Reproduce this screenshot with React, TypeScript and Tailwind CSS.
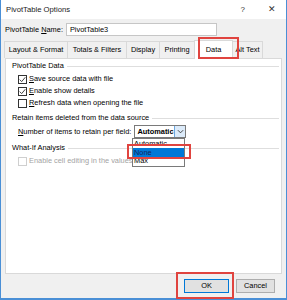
const FONT = { fontFamily: '"Liberation Sans", Arial, sans-serif' }

function CheckMark() {
  return (
    <svg className="h-[7px] w-[7px]" fill="none" stroke="#222" strokeWidth="1.2" viewBox="0 0 10 10">
      <title>Checked</title>
      <polyline points="1 5.2 3.8 8 9 1.8" />
    </svg>
  )
}

function CheckRow(props: { label: string; hot?: string; checked?: boolean; disabled?: boolean }) {
  const { label, hot, checked, disabled } = props
  return (
    <div className="flex h-[12px] items-center gap-[2px] pl-[12px]">
      <span
        className={`flex h-[9px] w-[9px] items-center justify-center border bg-white ${
          disabled ? "border-[#cfcfcf]" : "border-[#333]"
        }`}
      >
        {checked ? <CheckMark /> : null}
      </span>
      {disabled || !hot ? (
        <span className="text-[#a3a3a3]">{label}</span>
      ) : (
        <span className="text-black">
          <span className="underline">{hot}</span>
          {label.slice(hot.length)}
        </span>
      )}
    </div>
  )
}

function GroupHeader(props: { title: string }) {
  return (
    <div className="flex h-[12px] items-center gap-[3px] pl-[6px] pr-[2px]">
      <span className="text-black">{props.title}</span>
      <span className="h-px flex-1 bg-[#dedede]" />
    </div>
  )
}

const TABS = [
  { name: "Layout & Format", w: "w-[64px]" },
  { name: "Totals & Filters", w: "w-[60px]" },
  { name: "Display", w: "w-[34px]" },
  { name: "Printing", w: "w-[36px]" },
  { name: "Data", w: "w-[39px]" },
  { name: "Alt Text", w: "w-[31px]" },
]

export default function App() {
  const current = "Data"

  return (
    <div
      className="relative flex h-[300px] w-[287px] flex-col border-x border-b-2 border-[#4a8fd6] bg-[#f0f0f0] text-[7.4px] leading-none text-black"
      style={FONT}
    >
      {/* title bar */}
      <div className="flex h-[19px] shrink-0 items-center bg-white pl-[5px] pr-[10px]">
        <span className="flex-1 text-[7.7px] text-[#1a1a1a]">PivotTable Options</span>
        <span className="mr-[23px] text-[8px] text-[#333]">?</span>
        <span className="text-[9px] text-[#333]">✕</span>
      </div>

      {/* name row */}
      <div className="flex h-[21px] shrink-0 items-center gap-[3px] pl-[4px]">
        <span>
          PivotTable <span className="underline">N</span>ame:
        </span>
        <div className="flex h-[13px] w-[151px] items-center border border-[#c6c6c6] bg-white pl-[3px]">
          PivotTable3
        </div>
      </div>

      {/* tabs */}
      <div className="flex h-[18px] shrink-0 items-end pl-[4px]">
        {TABS.map((t) =>
          t.name === current ? (
            <div
              className={`relative z-10 -mb-px -ml-px flex h-[19px] items-center justify-center border border-b-0 border-[#d9d9d9] bg-white ${t.w}`}
              key={t.name}
            >
              {t.name}
            </div>
          ) : (
            <div
              className={`-ml-px flex h-[17px] items-center justify-center border border-b-0 border-[#d9d9d9] bg-[#f0f0f0] ${t.w}`}
              key={t.name}
            >
              {t.name}
            </div>
          ),
        )}
      </div>

      {/* panel */}
      <div className="mx-[4px] flex h-[216px] shrink-0 flex-col border border-[#d9d9d9] bg-white pt-px">
        <GroupHeader title="PivotTable Data" />
        <div className="h-px" />
        <CheckRow checked hot="S" label="Save source data with file" />
        <CheckRow checked hot="E" label="Enable show details" />
        <CheckRow hot="R" label="Refresh data when opening the file" />
        <div className="h-[3px]" />
        <GroupHeader title="Retain items deleted from the data source" />
        <div className="flex h-[15px] items-center gap-[3px] pl-[12px]">
          <span>
            <span className="underline">N</span>umber of items to retain per field:
          </span>
          <div className="flex h-[13px] w-[52px] items-center border border-[#7a7a7a] bg-white">
            <span className="flex-1 pl-[2px] font-bold">Automatic</span>
            <span className="flex h-full w-[11px] items-center justify-center border-l border-[#6ea8e0] bg-[#dcebfa]">
              <svg className="h-[5px] w-[7px]" fill="none" stroke="#333" strokeWidth="1" viewBox="0 0 8 5">
                <title>Open</title>
                <polyline points="1 1 4 4 7 1" />
              </svg>
            </span>
          </div>
        </div>
        <div className="h-[3px]" />
        <GroupHeader title="What-If Analysis" />
        <div className="h-px" />
        <CheckRow disabled label="Enable cell editing in the values" />
      </div>

      {/* footer */}
      <div className="flex flex-1 items-center justify-end gap-[7px] pr-[11px]">
        <div className="flex h-[14px] w-[45px] items-center justify-center border border-[#0078d7] bg-[#e1e1e1]">
          OK
        </div>
        <div className="flex h-[14px] w-[39px] items-center justify-center border border-[#adadad] bg-[#e1e1e1]">
          Cancel
        </div>
      </div>

      {/* dropdown list overlay */}
      <div className="absolute left-[131px] top-[138px] z-20 flex w-[53px] flex-col border border-[#7a7a7a] bg-white py-px">
        <div className="flex h-[8px] items-center pl-[1px]">Automatic</div>
        <div className="flex h-[9px] items-center bg-[#0078d7] pl-[1px] text-[#12245a]">None</div>
        <div className="flex h-[8px] items-center pl-[1px]">Max</div>
      </div>

      {/* red highlight boxes */}
      <div className="absolute left-[197px] top-[37px] z-30 h-[22px] w-[41px] border-2 border-[#e0443f]" />
      <div className="absolute left-[126px] top-[144px] z-30 h-[15px] w-[64px] border-2 border-[#e0443f]" />
      <div className="absolute left-[175px] top-[272px] z-30 h-[27px] w-[58px] border-2 border-[#e0443f]" />
    </div>
  )
}
